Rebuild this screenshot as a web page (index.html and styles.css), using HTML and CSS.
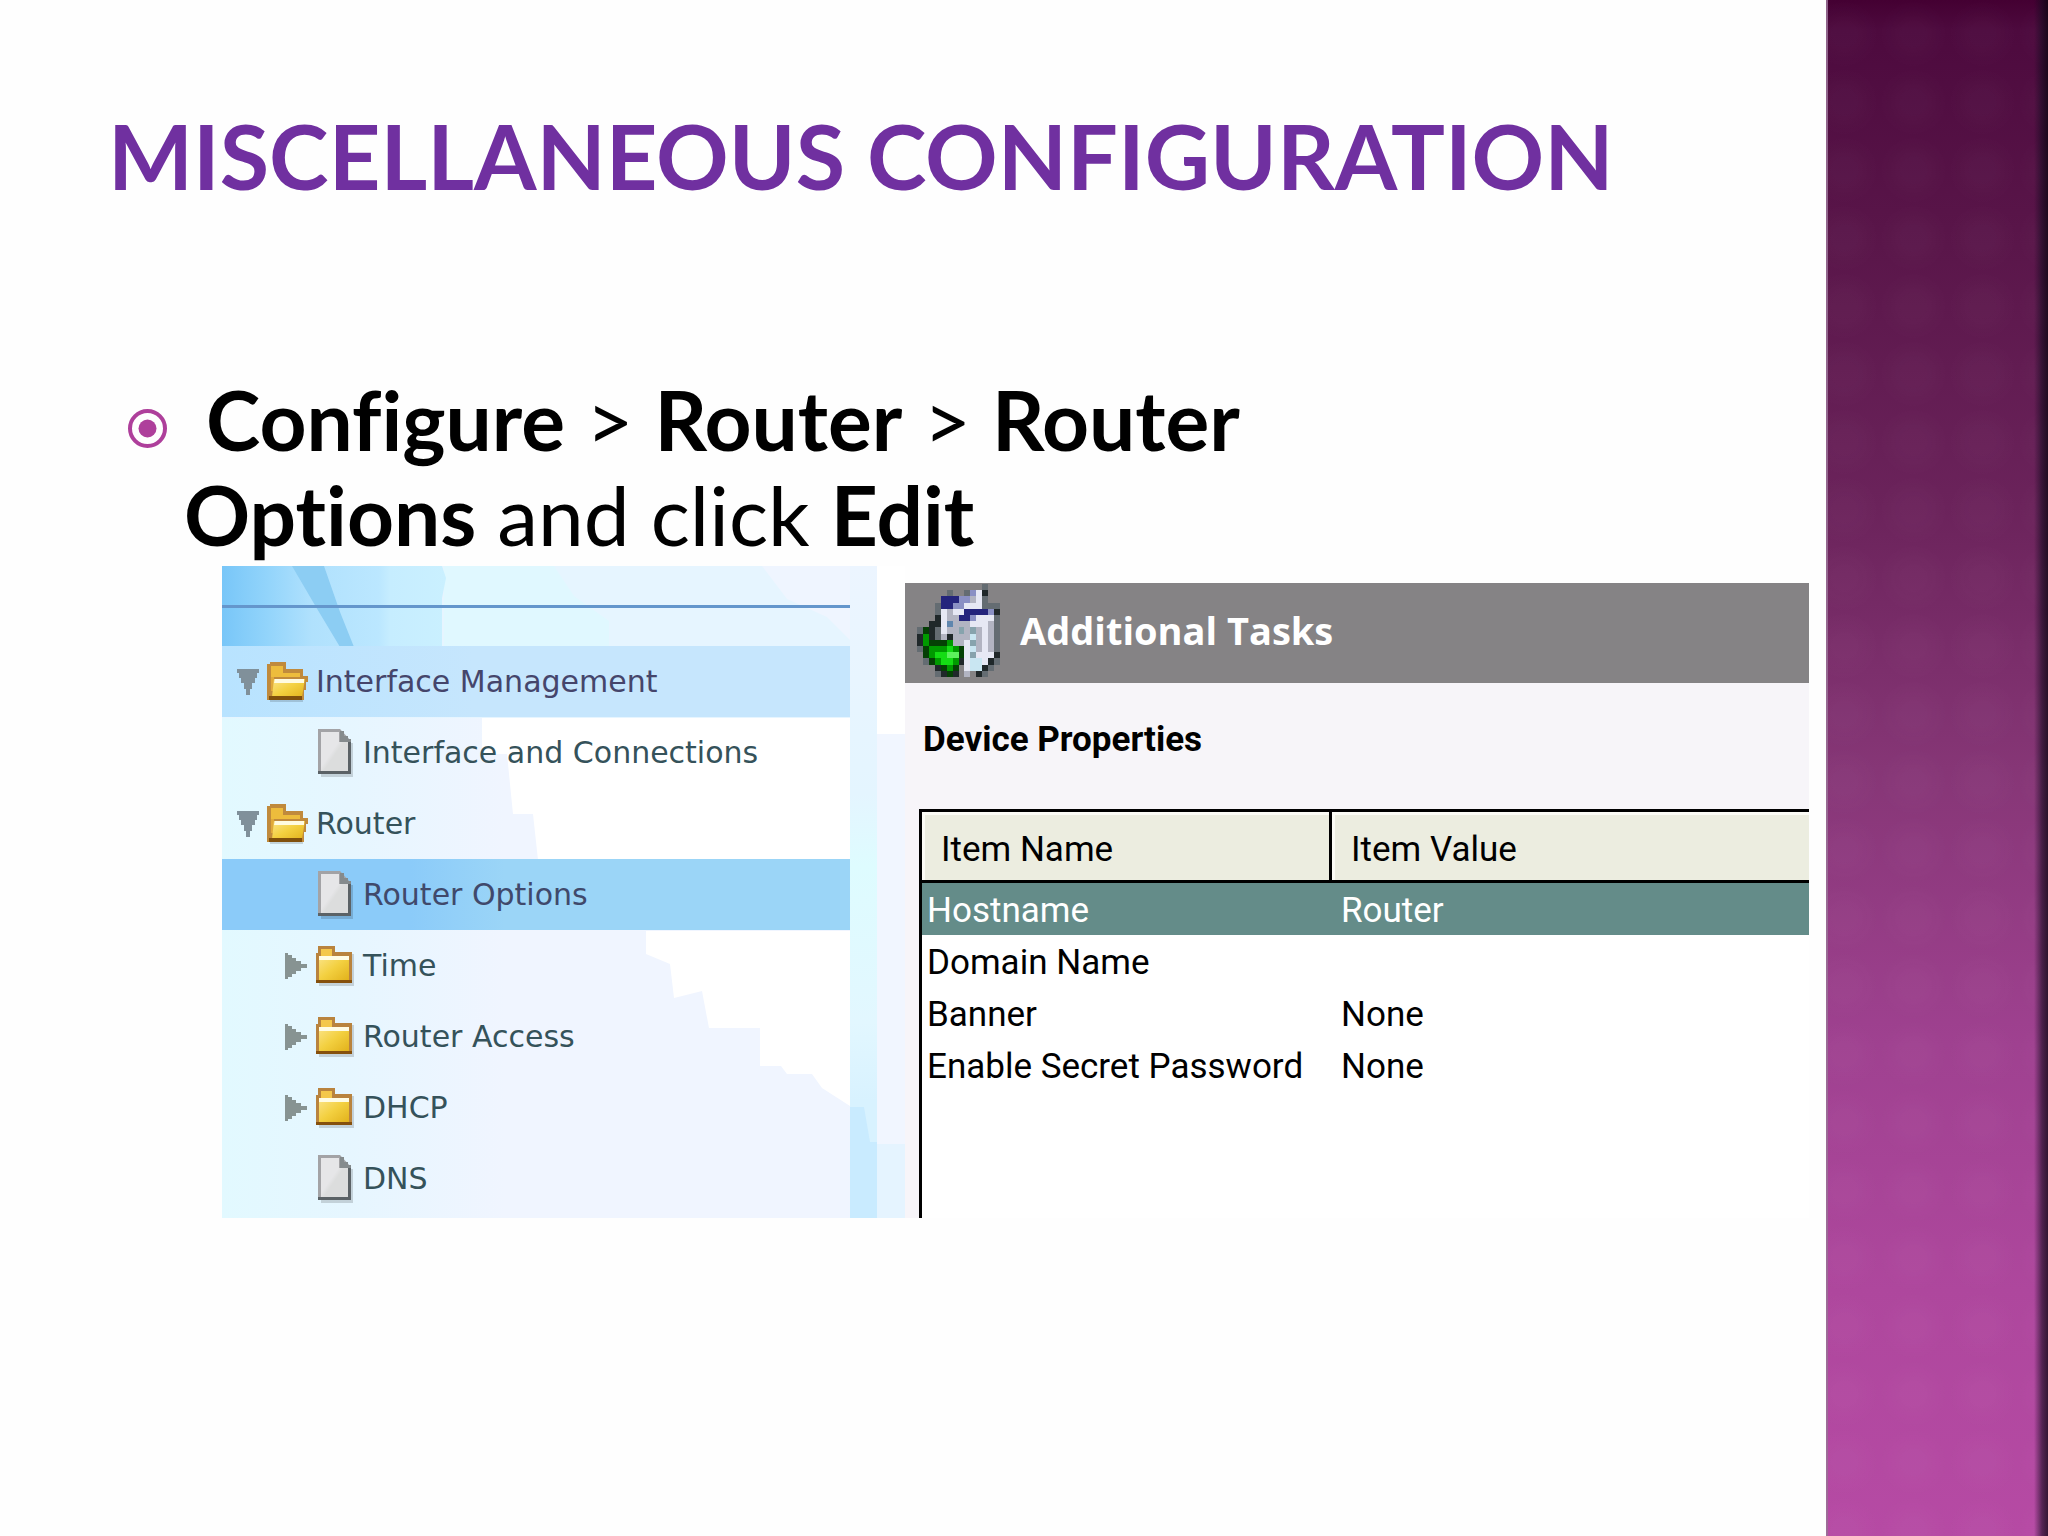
FILE: index.html
```
<!DOCTYPE html>
<html lang="en">
<head>
  <meta charset="UTF-8" />
  <meta name="viewport" content="width=device-width, initial-scale=1.0"/>
  <title>Miscellaneous Configuration</title>
  <link rel="stylesheet" href="styles.css">
</head>
<body>

  <!-- Shared icons -->
  <svg class="sprite" aria-hidden="true">
    <defs>
      <linearGradient id="gold" x1="0" y1="0" x2="1" y2="1">
        <stop offset="0" stop-color="#fbe488"/>
        <stop offset="0.5" stop-color="#f3d040"/>
        <stop offset="1" stop-color="#e2b21c"/>
      </linearGradient>
      <linearGradient id="paper" x1="0" y1="0" x2="1" y2="1">
        <stop offset="0.45" stop-color="#e6e6e8"/>
        <stop offset="0.55" stop-color="#dcdddd"/>
      </linearGradient>
    </defs>
    <symbol id="arrow-down" viewBox="0 0 22 26">
      <path d="M0 0h22v4h-2v5h-2v5h-3v6h-2v6h-4v-6h-2v-6h-3v-5h-2v-5h-2z" fill="#80909a"/>
    </symbol>
    <symbol id="arrow-right" viewBox="0 0 22 26">
      <path d="M0 0h3v2h4v3h4v3h5v3h6v4h-6v3h-5v3h-4v3h-4v2h-3z" fill="#879392"/>
    </symbol>
    <symbol id="folder-open" viewBox="0 0 41 40">
      <path d="M3 37h33v3h-33z" fill="#000" opacity="0.15"/>
      <path d="M0 2h3v-2h16v7h17v7h5v6h-2v8h-2v10h-37z" fill="#c08a3c"/>
      <path d="M4 4h12v7h17v4h-29z" fill="#edbc3c"/>
      <path d="M4 15h3v14h-3z" fill="#e0a93a"/>
      <path d="M7 17h31l-3 18h-30z" fill="url(#gold)"/>
      <path d="M8 17h29v4h-30z" fill="#fffbe0"/>
      <path d="M2 34h33v4h-33z" fill="#80500c"/>
    </symbol>
    <symbol id="folder" viewBox="0 0 38 40">
      <path d="M3 8h35v32h-35z" fill="#000" opacity="0.15"/>
      <path d="M0 7h2v-7h17v6h17v31h-36z" fill="#b9833e"/>
      <path d="M5 3h11v7h-11z" fill="#f4c74a"/>
      <path d="M3 10h30v24h-30z" fill="url(#gold)"/>
      <path d="M3 10h30v4h-30z" fill="#fffce4"/>
      <path d="M0 34h36v3h-36z" fill="#85500d"/>
    </symbol>
    <symbol id="file" viewBox="0 0 38 48">
      <path d="M5 14h32v34h-32z" fill="#000" opacity="0.15"/>
      <path d="M2 0h22l11 12v33h-33z" fill="#a3a3a6"/>
      <path d="M5 3h18v10h9v29h-27z" fill="url(#paper)"/>
      <path d="M24 2v11h11v-3h-3v-3h-4v-5z" fill="#858b8d"/>
      <path d="M32 13h3v32h-33v-3h30z" fill="#5b6266"/>
    </symbol>
  </svg>

  <div class="slide">
    <main class="content">
      <h1>MISCELLANEOUS CONFIGURATION</h1>

      <ul class="bullets">
        <li>
          <svg class="bullet" viewBox="0 0 39 39" aria-hidden="true">
            <circle cx="19.5" cy="19.5" r="17.5" fill="none" stroke="#ae3f9b" stroke-width="4"/>
            <circle cx="19.5" cy="19.5" r="9" fill="#ae3f9b"/>
          </svg>
          <p><b>Configure</b> &gt; <b>Router</b> &gt; <b>Router<br>Options</b> and click <b>Edit</b></p>
        </li>
      </ul>

      <div class="figure">
        <!-- Navigation tree -->
        <nav class="tree">
          <svg class="artwork" viewBox="0 0 683 652" preserveAspectRatio="none" aria-hidden="true">
            <defs>
              <linearGradient id="sky" x1="0" x2="1" y1="0" y2="0">
                <stop offset="0" stop-color="#78c6f8"/>
                <stop offset="0.2" stop-color="#92d4fb"/>
                <stop offset="0.4" stop-color="#b0e1fd"/>
                <stop offset="0.7" stop-color="#bbe7ff"/>
                <stop offset="0.75" stop-color="#c6edff"/>
                <stop offset="1" stop-color="#caf0ff"/>
              </linearGradient>
              <linearGradient id="mist" x1="0" x2="1" y1="0" y2="0">
                <stop offset="0" stop-color="#e2f9ff"/>
                <stop offset="0.2" stop-color="#e6f6ff"/>
                <stop offset="0.45" stop-color="#f0f5ff"/>
              </linearGradient>
              <linearGradient id="edge" x1="0" x2="0" y1="0" y2="1">
                <stop offset="0" stop-color="#ecf5ff"/>
                <stop offset="0.35" stop-color="#e4f5ff"/>
                <stop offset="0.46" stop-color="#defcff"/>
                <stop offset="0.7" stop-color="#e2f7ff"/>
                <stop offset="0.82" stop-color="#d8f2ff"/>
              </linearGradient>
            </defs>
            <path d="M0 0h655v152h-655z" fill="#e6f5ff"/>
            <path d="M540 0h115v81h-20l-30-30-40-18z" fill="#eff5ff"/>
            <path d="M222 0h110l20 30 35 25v26h-165z" fill="#e0f8ff"/>
            <path d="M0 0h220l4 12-4 20v49h-220z" fill="url(#sky)"/>
            <path d="M70 0h32l16 46 14 35h-14l-24-40z" fill="#8ccdf3"/>
            <path d="M0 152h628v500h-628z" fill="url(#mist)"/>
            <path d="M260 152h368v142h-312l-5-46h-20l-6-60h-25z" fill="#fff"/>
            <path d="M424 365h204v175l-28-18-10-14h-25l-6-8h-21v-38h-51l-7-37-28 7-4-34-24-10z" fill="#fff"/>
            <path d="M628 0h27v652h-27z" fill="url(#edge)"/>
            <path d="M628 541h14l6 35h7v76h-27z" fill="#c9ebff"/>
            <path d="M655 0h28v168h-28z" fill="#fff"/>
            <path d="M655 168h28v484h-28z" fill="#f1f6ff"/>
            <path d="M655 578h28v74h-28z" fill="#e5f4ff"/>
          </svg>
          <ul>
            <li><a class="row open" href="#"><svg class="arrow"><use href="#arrow-down"/></svg><svg class="icon-wide"><use href="#folder-open"/></svg>Interface Management</a></li>
            <li><a class="row child" href="#"><span class="arrow"></span><svg class="icon-file"><use href="#file"/></svg>Interface and Connections</a></li>
            <li><a class="row" href="#"><svg class="arrow"><use href="#arrow-down"/></svg><svg class="icon-wide"><use href="#folder-open"/></svg>Router</a></li>
            <li><a class="row child selected" href="#"><span class="arrow"></span><svg class="icon-file"><use href="#file"/></svg>Router Options</a></li>
            <li><a class="row child" href="#"><svg class="arrow"><use href="#arrow-right"/></svg><svg class="icon"><use href="#folder"/></svg>Time</a></li>
            <li><a class="row child" href="#"><svg class="arrow"><use href="#arrow-right"/></svg><svg class="icon"><use href="#folder"/></svg>Router Access</a></li>
            <li><a class="row child" href="#"><svg class="arrow"><use href="#arrow-right"/></svg><svg class="icon"><use href="#folder"/></svg>DHCP</a></li>
            <li><a class="row child" href="#"><span class="arrow"></span><svg class="icon-file"><use href="#file"/></svg>DNS</a></li>
          </ul>
        </nav>

        <!-- Additional tasks -->
        <section class="tasks">
          <header>
            <svg class="tasks-icon" viewBox="0 0 14 15" preserveAspectRatio="none" shape-rendering="crispEdges" aria-hidden="true">
              <path fill="#646c72" d="M11 0h1v4h-1zM8 1h1v1h-1zM5 1h1v1h-1zM12 3h2v1h-2zM13 4h1v9h-1zM3 3h1v2h-1zM3 7h1v2h-1zM0 7h1v1h-1zM0 10h1v1h-1zM1 12h1v1h-1zM3 14h1v1h-1zM12 13h1v1h-1zM11 14h1v1h-1z"/>
              <path fill="#e6e8f4" d="M8 3h3v1h-3zM10 1h1v2h-1zM4 4h4v1h-4zM4 5h1v3h-1zM8 6h5v7h-5zM10 5h3v1h-3zM8 13h3v1h-3z"/>
              <path fill="#b2b4c2" d="M5 5h3v3h-3zM6 8h2v2h-2zM8 6h1v3h-1zM4 8h1v1h-1zM10 7h1v4h-1zM12 6h1v5h-1zM8 14h1v1h-1zM9 2h1v1h-1zM5 4h1v1h-1z"/>
              <path fill="#8a90c4" d="M7 2h2v1h-2zM9 1h1v1h-1zM5 3h3v1h-3zM12 4h1v1h-1zM9 5h1v1h-1z"/>
              <path fill="#24247c" d="M4 2h3v1h-3zM4 3h2v1h-2zM8 4h4v1h-4zM7 5h2v1h-2z"/>
              <path fill="#5f86ae" d="M5 6h1v1h-1z"/>
              <path fill="#87a3ad" d="M9 7h1v1h-1zM9 9h1v1h-1zM9 11h1v1h-1zM7 7h1v1h-1z"/>
              <path fill="#c9e6f2" d="M9 10h1v1h-1zM9 12h2v2h-2zM9 8h1v1h-1z"/>
              <path fill="#20282a" d="M11 1h1v1h-1zM13 4h1v1h-1zM3 5h1v2h-1zM2 6h1v2h-1zM2 8h1v1h-1zM0 8h1v2h-1zM5 8h1v1h-1zM13 11h1v1h-1zM12 12h1v1h-1zM11 13h1v1h-1zM7 12h1v1h-1zM3 13h1v1h-1zM10 14h1v1h-1zM6 14h1v1h-1zM4 14h1v1h-1z"/>
              <path fill="#054005" d="M1 7h1v1h-1zM2 9h2v1h-2zM1 10h1v2h-1zM2 12h1v1h-1zM4 13h1v1h-1zM6 13h1v1h-1zM7 10h1v2h-1zM4 9h1v1h-1zM5 14h1v1h-1z"/>
              <path fill="#009a00" d="M1 8h1v2h-1zM2 10h3v1h-3zM5 9h1v1h-1zM6 10h1v1h-1zM2 11h1v1h-1zM3 12h1v1h-1zM6 12h1v1h-1zM5 13h1v1h-1z"/>
              <path fill="#14dc14" d="M3 11h2v1h-2zM5 10h1v3h-1zM4 12h1v1h-1z"/>
              <path fill="#5cf05c" d="M5 11h2v1h-2z"/>
            </svg>
            <h2>Additional Tasks</h2>
          </header>
          <h3>Device Properties</h3>
          <div class="table-wrap">
            <table>
              <thead>
                <tr><th>Item Name</th><th>Item Value</th></tr>
              </thead>
              <tbody>
                <tr class="active"><td>Hostname</td><td>Router</td></tr>
                <tr><td>Domain Name</td><td></td></tr>
                <tr><td>Banner</td><td>None</td></tr>
                <tr><td>Enable Secret Password</td><td>None</td></tr>
              </tbody>
            </table>
          </div>
        </section>
      </div>
    </main>

    <aside class="band"></aside>
  </div>

</body>
</html>
```
FILE: styles.css
```
* {
  box-sizing: border-box;
}

body {
  margin: 0;
  background: #fefefe;
  color: #000;
  font-family: Lato, sans-serif;
  font-variant-ligatures: none;
}

h1, h2, h3, p, ul {
  margin: 0;
  padding: 0;
}

ul {
  list-style: none;
}

.sprite {
  position: absolute;
  width: 0;
  height: 0;
}

.slide {
  display: flex;
  min-height: 100vh;
}

.content {
  flex: 1;
  padding: 101px 17px 0 108px;
}

h1 {
  color: #7030a0;
  font-size: 90px;
  line-height: 108px;
  font-weight: 700;
}

.bullets {
  margin-top: 163px;
  padding-left: 20px;
}

.bullets li {
  display: flex;
  gap: 17px;
}

.bullet {
  flex: none;
  width: 39px;
  height: 39px;
  margin-top: 37px;
}

.bullets p {
  font-size: 82px;
  line-height: 95px;
  text-indent: 22px;
}

.figure {
  display: flex;
  margin: 4px 0 0 114px;
  height: 652px;
}

/* Navigation tree */
.tree {
  position: relative;
  width: 683px;
  flex: none;
  padding-right: 55px;
}

.artwork {
  position: absolute;
  top: 0;
  left: 0;
  width: 100%;
  height: 100%;
}

.tree ul {
  position: relative;
  margin-top: 39px;
  padding-top: 38px;
  border-top: 3px solid #6496cc;
}

.row {
  display: flex;
  align-items: center;
  gap: 8px;
  height: 71px;
  padding-left: 15px;
  color: #35525a;
  font-family: "DejaVu Sans", sans-serif;
  font-size: 30px;
  text-decoration: none;
}

.child {
  padding-left: 63px;
  gap: 9px;
}

.open {
  background: linear-gradient(90deg, #b8e3ff, #c6e6fd 40%);
  color: #45456b;
}

.selected {
  background: linear-gradient(90deg, #8bcbf9 30%, #9bd5f7 45%);
  color: #40496b;
}

.arrow {
  width: 22px;
  height: 26px;
}

.icon-wide {
  width: 41px;
  height: 40px;
}

.icon {
  width: 38px;
  height: 40px;
}

.icon-file {
  width: 38px;
  height: 48px;
}

/* Additional tasks */
.tasks {
  flex: 1;
  display: flex;
  flex-direction: column;
  margin-top: 17px;
  background: #f7f5f9;
}

.tasks header {
  display: flex;
  align-items: center;
  gap: 20px;
  height: 100px;
  padding: 0 0 6px 12px;
  background: #858385;
}

.tasks-icon {
  width: 83px;
  height: 93px;
}

h2 {
  color: #fff;
  font-family: "Open Sans", sans-serif;
  font-size: 38px;
  font-weight: 700;
}

h3 {
  padding: 34px 0 46px 18px;
  font-family: Roboto, sans-serif;
  font-size: 35px;
  line-height: 46px;
  font-weight: 700;
}

.table-wrap {
  flex: 1;
  margin-left: 14px;
  border-top: 3px solid #000;
  border-left: 3px solid #000;
  background: #fff;
}

table {
  width: 100%;
  border-collapse: separate;
  border-spacing: 0;
  table-layout: fixed;
  font-family: Roboto, sans-serif;
  font-size: 35px;
}

th {
  height: 71px;
  padding: 6px 19px 0;
  border-bottom: 3px solid #000;
  background: #ecede0;
  box-shadow: inset 3px 3px 0 #fbfbf5;
  font-weight: 400;
  text-align: left;
}

th:first-child {
  width: 410px;
  border-right: 3px solid #000;
}

td {
  height: 52px;
  padding: 2px 0 0 5px;
}

td + td {
  padding-left: 9px;
}

.active td {
  background: #648c89;
  color: #fff;
}

/* Purple band */
.band {
  width: 222px;
  border-left: 2px solid rgba(255, 190, 245, 0.5);
  background:
    linear-gradient(90deg, transparent 206px, rgba(20, 10, 30, 0.6) 214px, rgba(10, 5, 15, 0.75)),
    radial-gradient(circle, rgba(255, 255, 255, 0.02) 12px, transparent 34px) 51px 0 / 69px 68px,
    linear-gradient(#440032, #4d0a3e 2%, #5a164a 16%, #6b235b 33%, #863676 50%, #9f4190 68%, #ae479d 84%, #b64aa4);
}
```
